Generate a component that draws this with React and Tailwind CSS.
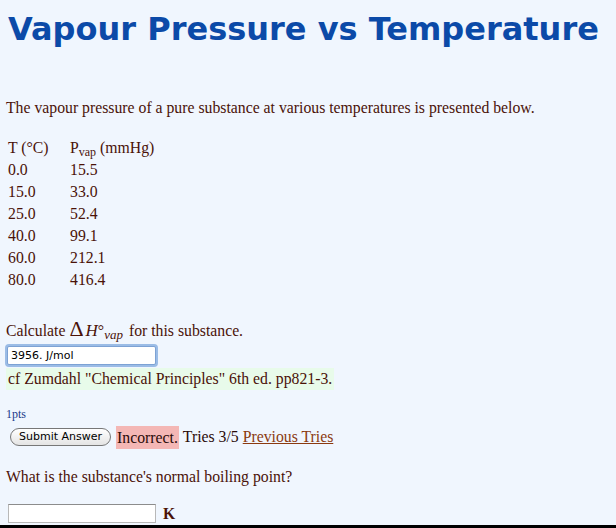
import React from 'react'

const rows = [
  ['0.0', '15.5'],
  ['15.0', '33.0'],
  ['25.0', '52.4'],
  ['40.0', '99.1'],
  ['60.0', '212.1'],
  ['80.0', '416.4'],
]

const serif = { fontFamily: '"Liberation Serif", "Times New Roman", serif' }
const ui = { fontFamily: '"DejaVu Sans", Verdana, sans-serif' }

export default function App() {
  return (
    <div className="h-[528px] flex flex-col bg-[#f0f6fe] text-[#4a1208] text-[15.75px]" style={serif}>
      <div className="flex-1 overflow-hidden">
        <h1
          className="pl-[8px] pt-[10px] text-[32px] font-bold leading-[38px] text-[#0b4aa8]"
          style={ui}
        >
          Vapour Pressure vs Temperature
        </h1>

        <p className="pl-[6px] mt-[50px] leading-[20px]">
          The vapour pressure of a pure substance at various temperatures is presented below.
        </p>

        <table className="ml-[8px] mt-[19px] leading-[22px]">
          <tbody>
            <tr className="h-[22px]">
              <td className="w-[62px] p-0">T (°C)</td>
              <td className="p-0">
                P<sub className="text-[12px]">vap</sub> (mmHg)
              </td>
            </tr>
            {rows.map(([t, p]) => (
              <tr key={t} className="h-[22px]">
                <td className="p-0">{t}</td>
                <td className="p-0">{p}</td>
              </tr>
            ))}
          </tbody>
        </table>

        <p className="pl-[6px] mt-[27px] leading-[22px]">
          Calculate <span className="text-[22px] mr-[2px]">Δ</span>
          <i className="text-[17px]">H</i>°<sub className="italic text-[13px] mr-[2px]">vap</sub> for
          this substance.
        </p>

        <div className="pl-[7px]">
          <input
            readOnly
            value="3956. J/mol"
            className="w-[149px] h-[19px] px-[3px] bg-white border border-[#7da2d4] rounded-[2px] shadow-[0_0_0_2px_#9bbce6] text-[11px] text-black outline-none"
            style={ui}
          />
        </div>

        <div className="ml-[6px] mt-[2px] w-fit h-[22px] pl-[2px] pr-[2px] bg-[#e8fbea] leading-[22px] whitespace-nowrap">
          cf Zumdahl "Chemical Principles" 6th ed. pp821-3.
        </div>

        <div className="pl-[6px] mt-[17px] text-[12px] leading-[14px] text-[#1a3a8a]">1pts</div>

        <div className="flex items-center pl-[10px] mt-[5px] h-[23px]">
          <button
            className="h-[18px] px-[8px] rounded-full border border-[#777] bg-gradient-to-b from-white to-[#e4e4e4] text-[11px] leading-[16px] text-black"
            style={ui}
          >
            Submit Answer
          </button>
          <span className="ml-[5px] h-[23px] leading-[23px] px-[1px] bg-[#f4b7b5] text-[#2a0a08]">
            Incorrect.
          </span>
          <span className="ml-[4px] text-[#2a0a08]">Tries 3/5</span>
          <a className="ml-[4px] underline text-[#8b3a10]">Previous Tries</a>
        </div>

        <p className="pl-[6px] mt-[18px] leading-[20px]">
          What is the substance's normal boiling point?
        </p>

        <div className="flex items-center pl-[8px] mt-[15px]">
          <input
            readOnly
            value=""
            className="w-[148px] h-[19px] bg-white border border-[#b8b8b8] border-t-[#8c8c8c] outline-none"
          />
          <b className="ml-[7px]">K</b>
        </div>
      </div>
      <div className="h-[3px] bg-black" />
    </div>
  )
}
